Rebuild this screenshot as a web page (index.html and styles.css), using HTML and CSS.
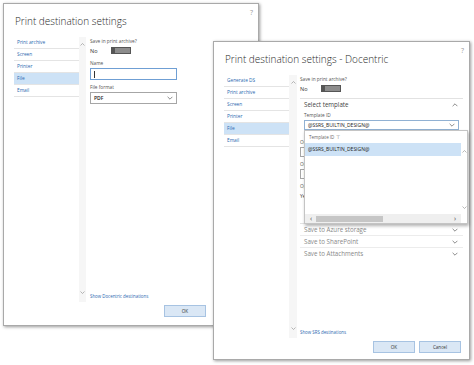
FILE: index.html
```html
<!DOCTYPE html>
<html lang="en">
<head>
  <meta charset="UTF-8" />
  <title>Print destination settings</title>
  <link rel="stylesheet" href="styles.css">
</head>
<body>
  <!-- standard dialog -->
  <div class="dialog dlg-file">
    <span class="help">?</span>
    <div class="dlg-title">Print destination settings</div>
    <div class="dlg-body">
      <ul class="nav">
        <li>Print archive</li>
        <li>Screen</li>
        <li>Printer</li>
        <li class="active">File</li>
        <li>Email</li>
      </ul>
      <div class="strip">
        <svg class="chev" viewBox="0 0 5 3"><polyline points="0.5,2.5 2.5,0.5 4.5,2.5" /></svg>
        <svg class="chev" viewBox="0 0 5 3"><polyline points="0.5,0.5 2.5,2.5 4.5,0.5" /></svg>
      </div>
      <div class="pane">
        <div class="lbl">Save in print archive?</div>
        <div class="toggle-row">
          <span class="toggle-text">No</span>
          <span class="toggle"></span>
        </div>
        <div class="lbl lbl-gap">Name</div>
        <div class="input input-focus"><span class="caret"></span></div>
        <div class="lbl lbl-gap2">File format</div>
        <div class="input input-select">
          <span>PDF</span>
          <svg class="chev chev-lg" viewBox="0 0 5 3"><polyline points="0.5,0.5 2.5,2.5 4.5,0.5" /></svg>
        </div>
        <a class="more-link">Show Docentric destinations</a>
      </div>
    </div>
    <div class="dlg-footer">
      <button class="btn">OK</button>
    </div>
  </div>

  <!-- docentric dialog -->
  <div class="dialog dlg-docentric">
    <span class="help">?</span>
    <div class="dlg-title">Print destination settings - Docentric</div>
    <div class="dlg-body">
      <ul class="nav">
        <li>Generate DS</li>
        <li>Print archive</li>
        <li>Screen</li>
        <li>Printer</li>
        <li class="active">File</li>
        <li>Email</li>
      </ul>
      <div class="strip">
        <svg class="chev" viewBox="0 0 5 3"><polyline points="0.5,2.5 2.5,0.5 4.5,2.5" /></svg>
        <svg class="chev" viewBox="0 0 5 3"><polyline points="0.5,0.5 2.5,2.5 4.5,0.5" /></svg>
      </div>
      <div class="pane pane-wide">
        <div class="lbl">Save in print archive?</div>
        <div class="toggle-row">
          <span class="toggle-text">No</span>
          <span class="toggle"></span>
        </div>

        <div class="group group-open">
          <div class="group-head">
            <span>Select template</span>
            <svg class="chev chev-lg" viewBox="0 0 5 3"><polyline points="0.5,2.5 2.5,0.5 4.5,2.5" /></svg>
          </div>
          <div class="group-body">
            <div class="lbl">Template ID</div>
            <div class="lookup">
              <div class="input input-select input-lookup">
                <span>@SSRS_BUILTIN_DESIGN@</span>
                <svg class="chev chev-lg" viewBox="0 0 5 3"><polyline points="0.5,0.5 2.5,2.5 4.5,0.5" /></svg>
              </div>
              <div class="dropdown">
                <div class="dd-head">Template ID &#8868;</div>
                <div class="dd-main">
                  <div class="dd-list">
                    <div class="dd-row">@SSRS_BUILTIN_DESIGN@</div>
                  </div>
                  <div class="dd-vscroll">
                    <svg class="chev" viewBox="0 0 5 3"><polyline points="0.5,2.5 2.5,0.5 4.5,2.5" /></svg>
                    <svg class="chev" viewBox="0 0 5 3"><polyline points="0.5,0.5 2.5,2.5 4.5,0.5" /></svg>
                  </div>
                </div>
                <div class="dd-hscroll">
                  <span class="arrow">&lsaquo;</span>
                  <span class="thumb"></span>
                  <span class="arrow arrow-right">&rsaquo;</span>
                </div>
              </div>
            </div>
            <!-- fields partly hidden behind the dropdown -->
            <div class="hidden-fields">
              <div class="lbl">Output file name</div>
              <div class="input input-short">Example</div>
              <div class="lbl">Output format</div>
              <div class="input input-short">MS Word</div>
              <div class="lbl">Open file</div>
              <div class="plain">Yes</div>
            </div>
          </div>
        </div>

        <div class="group-head group-closed">
          <span>Save to Azure storage</span>
          <svg class="chev chev-lg" viewBox="0 0 5 3"><polyline points="0.5,0.5 2.5,2.5 4.5,0.5" /></svg>
        </div>
        <div class="group-head group-closed">
          <span>Save to SharePoint</span>
          <svg class="chev chev-lg" viewBox="0 0 5 3"><polyline points="0.5,0.5 2.5,2.5 4.5,0.5" /></svg>
        </div>
        <div class="group-head group-closed">
          <span>Save to Attachments</span>
          <svg class="chev chev-lg" viewBox="0 0 5 3"><polyline points="0.5,0.5 2.5,2.5 4.5,0.5" /></svg>
        </div>

        <a class="more-link">Show SRS destinations</a>
      </div>
    </div>
    <div class="dlg-footer dlg-footer-wide">
      <button class="btn">OK</button>
      <button class="btn">Cancel</button>
    </div>
  </div>
</body>
</html>
```

FILE: styles.css
```css
* { box-sizing: border-box; }

body {
  margin: 0;
  width: 474px;
  height: 365px;
  background: #fff;
  color: #333;
  font-family: 'Open Sans', 'Noto Sans', sans-serif;
  position: relative;
  overflow: hidden;
}

/* windows on the desk */
.dialog {
  position: absolute;
  background: #fff;
  border: 1px solid #a9a9a9;
  box-shadow: 1px 1px 3px rgba(0, 0, 0, 0.4);
  display: flex;
  flex-direction: column;
}

.dlg-file {
  left: 3px;
  top: 3px;
  width: 256px;
  height: 323px;
}

.dlg-docentric {
  left: 213px;
  top: 41px;
  width: 257px;
  height: 319px;
}

.help {
  position: absolute;
  top: 4px;
  right: 5px;
  font-size: 7px;
  color: #999;
}

.dlg-title {
  height: 33px;
  padding: 9px 0 0 11px;
  font-size: 10px;
  line-height: 16px;
  font-weight: 300;
  color: #2a2a2a;
}

.dlg-body {
  flex: 1;
  display: flex;
  padding-left: 10px;
  min-height: 0;
}

/* left navigation */
.nav {
  width: 65px;
  list-style: none;
  margin: 0;
  padding: 0;
  align-self: flex-start;
}

.dlg-docentric .nav { width: 66px; }

.nav li {
  height: 12px;
  line-height: 11px;
  padding-left: 3px;
  font-size: 4.8px;
  color: #2b68b0;
  border-bottom: 1px solid #e4e4e4;
}

.nav li.active {
  background: #cde2f6;
}

.strip {
  width: 7px;
  background: #f6f6f6;
  display: flex;
  flex-direction: column;
  justify-content: space-between;
  align-items: center;
  padding: 6px 0 8px;
}

.dlg-docentric .strip { width: 8px; }

.chev {
  width: 5px;
  height: 3px;
  fill: none;
  stroke: #999;
  stroke-width: 0.7;
}

.chev-lg {
  width: 6px;
  height: 4px;
  stroke: #777;
}

/* content pane */
.pane {
  flex: 1;
  display: flex;
  flex-direction: column;
  padding: 1px 0 0 4px;
}

.pane-wide {
  padding: 1px 6px 0 3px;
}

.lbl {
  font-size: 4.75px;
  line-height: 7px;
  color: #555;
}

.lbl-gap { margin-top: 6px; }
.lbl-gap2 { margin-top: 4px; }

.toggle-row {
  display: flex;
  align-items: center;
  height: 7px;
  margin-top: 2px;
}

.toggle-text {
  width: 21px;
  font-size: 5.5px;
  color: #333;
}

.toggle {
  width: 20px;
  height: 7px;
  background: #555;
  padding: 1px 1px 1px 4px;
}

.toggle::after {
  content: '';
  display: block;
  height: 100%;
  background: #8c8c8c;
}

.input {
  width: 87px;
  height: 12px;
  border: 1px solid #a6a6a6;
  display: flex;
  align-items: center;
  justify-content: space-between;
  padding: 0 3px 0 3px;
  font-size: 5px;
  color: #222;
  margin-top: 1px;
}

.input-focus {
  border-color: #6f9fd4;
}

.caret {
  width: 1px;
  height: 7px;
  background: #333;
}

.input-select span {
  font-weight: 600;
}

.more-link {
  margin-top: auto;
  margin-bottom: 2px;
  font-size: 4.4px;
  line-height: 7px;
  color: #2b68b0;
}

.dlg-footer {
  display: flex;
  justify-content: flex-end;
  gap: 4px;
  padding: 3px 52px 8px 0;
}

.dlg-footer-wide {
  padding: 3px 8px 6px 0;
}

.btn {
  width: 42px;
  height: 12px;
  padding: 0;
  background: #dae7f5;
  border: 1px solid #a7c3e2;
  font-family: inherit;
  font-size: 4.6px;
  color: #333;
}

/* field groups */
.group-head {
  height: 12px;
  border-top: 1px solid #e2e2e2;
  display: flex;
  align-items: center;
  justify-content: space-between;
  padding: 0 5px 0 4px;
  font-size: 6.2px;
  color: #444;
}

.group-open {
  margin-top: 6px;
}

.group-body {
  padding: 2px 4px 0;
  height: 113px;
}

.group-closed {
  color: #888;
}

.group-closed + .group-closed {
  border-top-color: #ececec;
}

.lookup {
  position: relative;
}

.input-lookup {
  width: 155px;
  height: 10px;
  border-color: #91b1d3;
}

.input-lookup span {
  font-weight: 400;
}

/* lookup dropdown over the form */
.dropdown {
  position: absolute;
  top: 100%;
  left: 0;
  width: 164px;
  height: 94px;
  background: #fff;
  border: 1px solid #c4c4c4;
  box-shadow: 1px 2px 3px rgba(0, 0, 0, 0.3);
  display: flex;
  flex-direction: column;
  z-index: 5;
}

.dd-head {
  height: 12px;
  line-height: 12px;
  padding-left: 4px;
  font-size: 4.5px;
  color: #666;
}

.dd-main {
  flex: 1;
  display: flex;
}

.dd-list {
  flex: 1;
}

.dd-row {
  height: 13px;
  line-height: 13px;
  padding-left: 3px;
  background: #cde2f6;
  font-size: 5px;
  color: #222;
}

.dd-vscroll {
  width: 6px;
  display: flex;
  flex-direction: column;
  justify-content: space-between;
  align-items: center;
  padding: 7px 0 5px;
}

.dd-hscroll {
  height: 9px;
  margin-right: 6px;
  background: #efefef;
  display: flex;
  align-items: center;
  padding: 0 5px 0 5px;
  font-size: 7px;
  color: #444;
}

.dd-hscroll .thumb {
  width: 67px;
  height: 6px;
  margin-left: 4px;
  background: #c6c6c6;
}

.arrow-right {
  margin-left: auto;
}

.hidden-fields {
  margin-left: -4px;
  margin-top: 9px;
}

.hidden-fields .lbl {
  margin-top: 4px;
}

.input-short {
  width: 60px;
  height: 10px;
  justify-content: flex-start;
}

.plain {
  font-size: 5px;
  margin-top: 3px;
}
```
